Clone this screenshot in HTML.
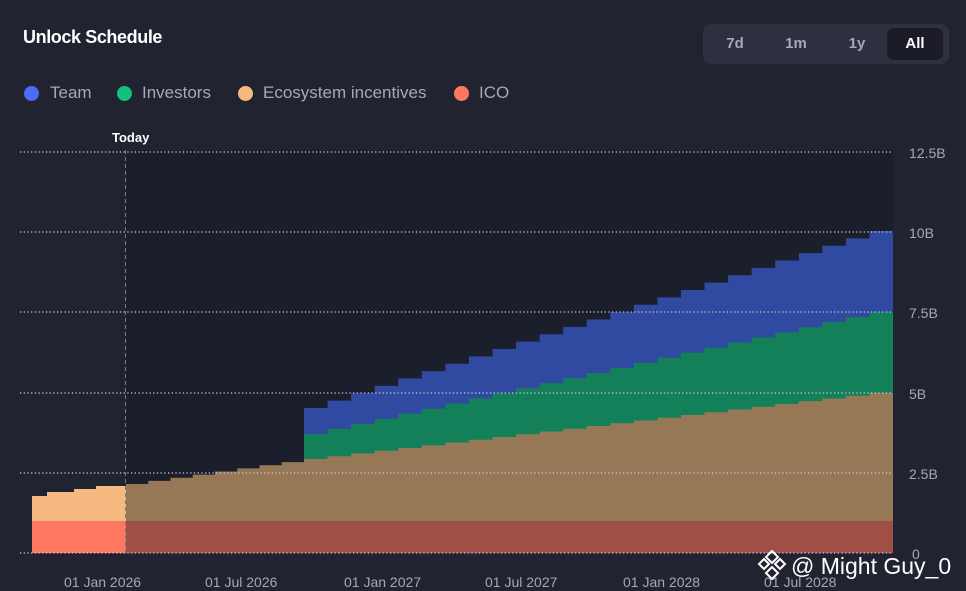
<!DOCTYPE html>
<html><head><meta charset="utf-8"><style>
html,body{margin:0;padding:0;background:#222330;width:966px;height:591px;overflow:hidden;font-family:"Liberation Sans",sans-serif}
.t{position:absolute;left:23px;top:27px;color:#fff;font-weight:bold;font-size:18px;letter-spacing:-0.4px}
.tabs{position:absolute;left:703px;top:24px;width:246px;height:40px;background:#2e303f;border-radius:8px}
.tab{position:absolute;top:4px;height:32px;line-height:32px;width:56px;text-align:center;color:#a3a9b9;font-size:15px;font-weight:bold}
.tab.on{background:#1b1c27;color:#fff;border-radius:7px}
.lg{position:absolute;top:83px;left:0;font-size:17px;color:#a3a9b9}
.lg span{position:absolute;white-space:nowrap;line-height:20px}
.lg i{position:absolute;width:15px;height:15px;border-radius:50%;top:3px}
</style></head><body>
<div class="t">Unlock Schedule</div>
<div class="tabs">
<div class="tab" style="left:4px">7d</div>
<div class="tab" style="left:65px">1m</div>
<div class="tab" style="left:126px">1y</div>
<div class="tab on" style="left:184px">All</div>
</div>
<div class="lg">
<i style="left:24px;background:#4a6cf7"></i><span style="left:50px">Team</span>
<i style="left:117px;background:#12c27c"></i><span style="left:142px">Investors</span>
<i style="left:238px;background:#f5b97f"></i><span style="left:263px">Ecosystem incentives</span>
<i style="left:454px;background:#ff7760"></i><span style="left:479px">ICO</span>
</div>
<svg width="966" height="591" style="position:absolute;left:0;top:0" font-family="Liberation Sans, sans-serif">
<defs>
<clipPath id="L"><rect x="0" y="0" width="126" height="591"/></clipPath>
<clipPath id="R"><rect x="126" y="0" width="767" height="591"/></clipPath>
</defs>
<rect x="126" y="150" width="767" height="403" fill="#1b1e2b"/>
<!-- team -->
<path d="M304 553V408h23.56v-7.375h23.56v-7.375h23.56v-7.375h23.56v-7.375h23.56v-7.375h23.56v-7.375h23.56v-7.375h23.56v-7.375h23.56v-7.375h23.56v-7.375h23.56v-7.375h23.56v-7.375h23.56v-7.375h23.56v-7.375h23.56v-7.375h23.56v-7.375h23.56v-7.375h23.56v-7.375h23.56v-7.375h23.56v-7.375h23.56v-7.375h23.56v-7.375h23.56v-7.375h23.56v-7.375h23.56V553Z" fill="#2f4aa0"/>
<!-- investors -->
<path d="M304 553V434h23.56v-5.083h23.56v-5.083h23.56v-5.083h23.56v-5.083h23.56v-5.083h23.56v-5.083h23.56v-5.083h23.56v-5.083h23.56v-5.083h23.56v-5.083h23.56v-5.083h23.56v-5.083h23.56v-5.083h23.56v-5.083h23.56v-5.083h23.56v-5.083h23.56v-5.083h23.56v-5.083h23.56v-5.083h23.56v-5.083h23.56v-5.083h23.56v-5.083h23.56v-5.083h23.56v-5.083h23.56V553Z" fill="#138059"/>
<!-- eco -->
<g id="eco">
<path id="ep" d="M32 553V496H47V492H74V489H96V486H126V484h22.25v-3.125h22.25v-3.125h22.25v-3.125h22.25v-3.125h22.25v-3.125h22.25v-3.125h22.25v-3.125h22.25v-3.125h23.56v-2.75h23.56v-2.75h23.56v-2.75h23.56v-2.75h23.56v-2.75h23.56v-2.75h23.56v-2.75h23.56v-2.75h23.56v-2.75h23.56v-2.75h23.56v-2.75h23.56v-2.75h23.56v-2.75h23.56v-2.75h23.56v-2.75h23.56v-2.75h23.56v-2.75h23.56v-2.75h23.56v-2.75h23.56v-2.75h23.56v-2.75h23.56v-2.75h23.56v-2.75h23.56v-2.75h23.56V553Z" fill="#f5b97f" clip-path="url(#L)"/>
<path d="M32 553V496H47V492H74V489H96V486H126V484h22.25v-3.125h22.25v-3.125h22.25v-3.125h22.25v-3.125h22.25v-3.125h22.25v-3.125h22.25v-3.125h22.25v-3.125h23.56v-2.75h23.56v-2.75h23.56v-2.75h23.56v-2.75h23.56v-2.75h23.56v-2.75h23.56v-2.75h23.56v-2.75h23.56v-2.75h23.56v-2.75h23.56v-2.75h23.56v-2.75h23.56v-2.75h23.56v-2.75h23.56v-2.75h23.56v-2.75h23.56v-2.75h23.56v-2.75h23.56v-2.75h23.56v-2.75h23.56v-2.75h23.56v-2.75h23.56v-2.75h23.56v-2.75h23.56V553Z" fill="#967857" clip-path="url(#R)"/>
</g>
<!-- ICO -->
<rect x="32" y="521" width="94" height="32" fill="#ff7760"/>
<rect x="126" y="521" width="767" height="32" fill="#a04f46"/>
<!-- grid -->
<g stroke="#c8cbd6" stroke-width="1.3" stroke-dasharray="1.3 2.4">
<line x1="20" y1="152" x2="893" y2="152"/><line x1="20" y1="232" x2="893" y2="232"/><line x1="20" y1="312" x2="893" y2="312"/><line x1="20" y1="393" x2="893" y2="393"/><line x1="20" y1="473" x2="893" y2="473"/><line x1="20" y1="553" x2="893" y2="553"/>
</g>
<line x1="125.5" y1="150" x2="125.5" y2="553" stroke="#777b8a" stroke-dasharray="4 3"/>
<text x="112" y="142" fill="#fff" font-size="13" font-weight="bold">Today</text>
<g fill="#a3a9b9" font-size="14">
<text x="909" y="158">12.5B</text><text x="909" y="238">10B</text><text x="909" y="318">7.5B</text><text x="909" y="399">5B</text><text x="909" y="479">2.5B</text><text x="912" y="559">0</text>
<text x="64" y="587">01 Jan 2026</text><text x="205" y="587">01 Jul 2026</text><text x="344" y="587">01 Jan 2027</text><text x="485" y="587">01 Jul 2027</text><text x="623" y="587">01 Jan 2028</text><text x="764" y="587">01 Jul 2028</text>
</g>
<g fill="none" stroke="#fff" stroke-width="2"><path d="M772 551l6 6-6 6-6-6z M772 567l6 6-6 6-6-6z M764 559l5 5-5 5-5-5z M780 559l5 5-5 5-5-5z"/></g>
<text x="791" y="574" fill="#fff" font-size="23">@ Might Guy_0</text>
</svg>
</body></html>
